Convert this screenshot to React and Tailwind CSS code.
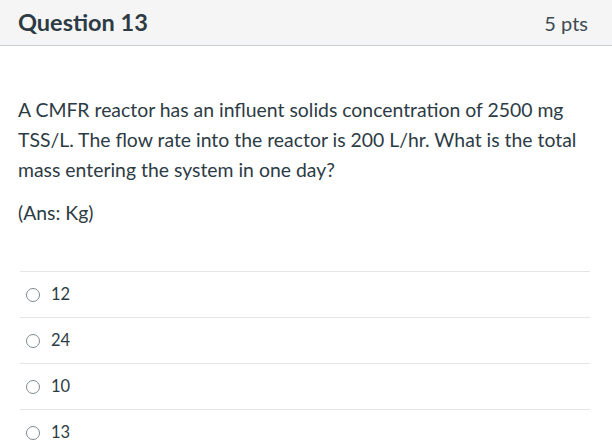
import React from "react";

const answers = ["12", "24", "10", "13"];

const App = () => {
  return (
    <div
      className="w-[612px] h-[448px] overflow-hidden bg-white text-[#2d3b45]"
      style={{ fontFamily: "Lato, 'Liberation Sans', sans-serif" }}
    >
      {/* header */}
      <div className="h-[46px] bg-[#f5f5f5] border-b border-[#c7cdd1] flex items-center justify-between pl-[18px] pr-[24px]">
        <span className="text-[23.5px] font-bold">Question 13</span>
        <span className="text-[20px] text-[#3d4a52]">5 pts</span>
      </div>

      {/* body */}
      <div className="pl-[18px] pr-[16px] pt-[49px] text-[19.4px] leading-[30px]">
        <p>
          A CMFR reactor has an influent solids concentration of 2500 mg
          TSS/L. The flow rate into the reactor is 200 L/hr. What is the total
          mass entering the system in one day?
        </p>
        <p className="mt-[13px]">(Ans: Kg)</p>
      </div>

      {/* answers */}
      <div className="mt-[43px] ml-[20px] mr-[22px]">
        {answers.map((a) => (
          <label
            key={a}
            className="h-[46px] border-t border-[#e3e6e8] flex items-center gap-[11px] pl-[6px]"
          >
            <span className="w-[14px] h-[14px] rounded-full border border-[#7e8a92] bg-white" />
            <span className="text-[16.5px]">{a}</span>
          </label>
        ))}
      </div>
    </div>
  );
};

export default App;
